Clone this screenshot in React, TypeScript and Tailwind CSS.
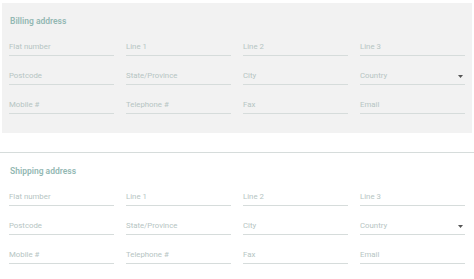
import React from 'react'

const rows = [
  ['Flat number', 'Line 1', 'Line 2', 'Line 3'],
  ['Postcode', 'State/Province', 'City', 'Country'],
  ['Mobile #', 'Telephone #', 'Fax', 'Email'],
]

function Field({ label }: { label: string }) {
  return (
    <div className="h-[29px] flex items-end justify-between pb-[3px] border-b border-[#d6dcdb]">
      <span className="text-[7.8px] leading-[10px] text-[#b6c5c3]">{label}</span>
      {label === 'Country' && (
        <svg width="5" height="3" viewBox="0 0 5 3" className="mr-[2px] mb-[3px]">
          <path d="M0 0 L5 0 L2.5 3 Z" fill="#555" />
        </svg>
      )}
    </div>
  )
}

function AddressBlock({ title }: { title: string }) {
  return (
    <div>
      <h2 className="text-[8.5px] leading-[12px] font-semibold text-[#93b8b3] pl-[1px]">{title}</h2>
      <div className="grid grid-cols-4 gap-x-[12px]">
        {rows.flat().map((l) => (
          <Field key={l} label={l} />
        ))}
      </div>
    </div>
  )
}

export default function App() {
  return (
    <div className="w-[474px] h-[279px] bg-white overflow-hidden" style={{ fontFamily: 'Roboto, "Liberation Sans", sans-serif' }}>
      <div className="mt-[3px] mx-[2px] bg-[#f2f2f2] pt-[12px] pb-[19px] px-[7px]">
        <AddressBlock title="Billing address" />
      </div>
      <div className="mt-[19px] border-t border-[#d6dcdb] pt-[12px] px-[9px]">
        <AddressBlock title="Shipping address" />
      </div>
    </div>
  )
}
